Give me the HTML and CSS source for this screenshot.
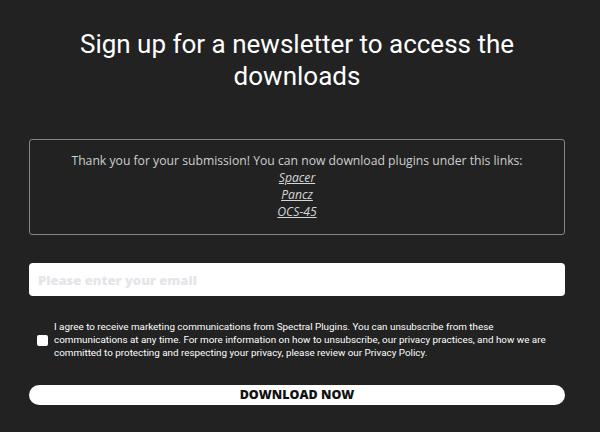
FILE: index.html
```html
<!DOCTYPE html>
<html lang="en">
<head>
<meta charset="utf-8">
<title>Newsletter</title>
<link rel="stylesheet" href="styles.css">
</head>
<body>
<main class="page">
  <h1 class="title">Sign up for a newsletter to access the downloads</h1>
  <div class="notice">
    <p class="notice-text">Thank you for your submission! You can now download plugins under this links:</p>
    <a class="dl-link" href="#">Spacer</a>
    <a class="dl-link" href="#">Pancz</a>
    <a class="dl-link" href="#">OCS-45</a>
  </div>
  <form class="form">
    <input class="email" type="email" placeholder="Please enter your email">
    <label class="consent">
      <input class="check" type="checkbox">
      <span class="consent-text">I agree to receive marketing communications from Spectral Plugins. You can unsubscribe from these communications at any time. For more information on how to unsubscribe, our privacy practices, and how we are committed to protecting and respecting your privacy, please review our Privacy Policy.</span>
    </label>
    <button class="submit" type="button">DOWNLOAD NOW</button>
  </form>
</main>
</body>
</html>
```
FILE: styles.css
```css
html, body {
  margin: 0;
  padding: 0;
  background: #222222;
}
.page {
  box-sizing: border-box;
  width: 600px;
  height: 432px;
  padding: 28px 35px 0 29px;
  display: flex;
  flex-direction: column;
}
.title {
  margin: 0 0 47px;
  font-family: Roboto, "Liberation Sans", sans-serif;
  font-weight: 400;
  font-size: 26px;
  line-height: 32px;
  color: #ffffff;
  text-align: center;
  padding: 0 40px;
}
.notice {
  box-sizing: border-box;
  height: 96px;
  border: 1px solid #858585;
  border-radius: 3px;
  padding: 12px 10px 0;
  display: flex;
  flex-direction: column;
  align-items: center;
  font-family: "Open Sans", sans-serif;
  font-size: 12.2px;
  line-height: 17px;
  color: #cfcfcf;
}
.notice-text {
  margin: 0;
  text-align: center;
}
.dl-link {
  color: #d6d6d6;
  font-style: italic;
  text-decoration: underline;
}
.form {
  display: flex;
  flex-direction: column;
  margin-top: 28px;
}
.email {
  box-sizing: border-box;
  height: 33px;
  margin: 0;
  border: none;
  border-radius: 4px;
  background: #ffffff;
  padding: 0 9px;
  font-family: "Open Sans", sans-serif;
  font-weight: 800;
  font-size: 13px;
  outline: none;
}
.email::placeholder {
  color: #e3e5e9;
}
.consent {
  display: flex;
  align-items: center;
  margin-top: 24px;
  padding-left: 8px;
}
.check {
  appearance: none;
  -webkit-appearance: none;
  width: 11px;
  height: 11px;
  margin: 1px 6px 0 0;
  flex: none;
  background: #ffffff;
  border-radius: 2px;
}
.consent-text {
  font-family: Roboto, "Liberation Sans", sans-serif;
  font-size: 9.85px;
  line-height: 13px;
  color: #ffffff;
}
.submit {
  margin-top: 26px;
  height: 20px;
  border: none;
  border-radius: 10px;
  background: #ffffff;
  color: #111111;
  font-family: "Open Sans", sans-serif;
  font-weight: 800;
  font-size: 12.5px;
  padding: 0;
  line-height: 20px;
}
```
